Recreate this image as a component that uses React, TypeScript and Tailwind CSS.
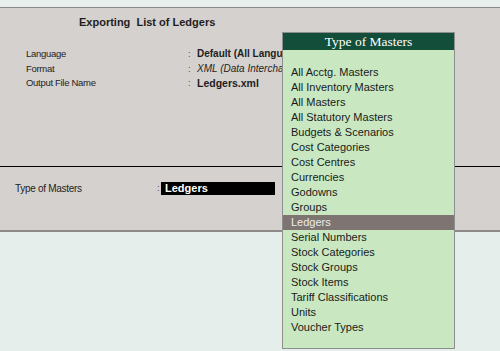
import React from "react";

const items = [
  "All Acctg. Masters",
  "All Inventory Masters",
  "All Masters",
  "All Statutory Masters",
  "Budgets & Scenarios",
  "Cost Categories",
  "Cost Centres",
  "Currencies",
  "Godowns",
  "Groups",
  "Ledgers",
  "Serial Numbers",
  "Stock Categories",
  "Stock Groups",
  "Stock Items",
  "Tariff Classifications",
  "Units",
  "Voucher Types",
];

export default function App() {
  return (
    <div
      className="relative w-[500px] h-[351px] overflow-hidden bg-[#e6eeeb] text-[#1e1e1e]"
      style={{ fontFamily: '"Liberation Sans", Arial, sans-serif' }}
    >
      <div className="h-[7px] bg-[#e8efec] border-b border-[#8c8a88] box-content" />
      <div className="bg-[#d5d1ce] border-b-2 border-[#8e8a88]">
        <div className="h-[159px] border-b border-black box-border pt-[7px]">
          <div className="pl-[79px] text-[11px] font-bold leading-[14px] whitespace-pre">
            Exporting  List of Ledgers
          </div>
          <div className="mt-[18px] flex flex-col">
            {[
              { l: "Language", v: "Default (All Languages)", c: "font-bold text-[10px]" },
              { l: "Format", v: "XML (Data Interchange)", c: "italic text-[10px]" },
              { l: "Output File Name", v: "Ledgers.xml", c: "font-bold text-[10.5px]" },
            ].map((r) => (
              <div key={r.l} className="flex h-[14.5px] items-center leading-[14px]">
                <div className="w-[188px] pl-[26px] text-[9.5px] tracking-[-0.3px]">{r.l}</div>
                <div className="w-[9px] text-[9.5px] text-[#555]">:</div>
                <div className={`whitespace-nowrap ${r.c}`}>{r.v}</div>
              </div>
            ))}
          </div>
        </div>
        <div className="h-[63px] pt-[15px]">
          <div className="flex items-center h-[13px]">
            <div className="w-[157px] pl-[15px] text-[10px] tracking-[-0.3px]">Type of Masters</div>
            <div className="w-[4px] text-[9.5px] text-[#555]">:</div>
            <div className="w-[114px] h-[13px] bg-black text-white font-bold text-[11px] leading-[13px] pl-[4px]">
              Ledgers
            </div>
          </div>
        </div>
      </div>

      <div className="absolute left-[282px] top-[32px] w-[173px] h-[317px] border border-[#8e8e8e] bg-[#c9e8c2]">
        <div
          className="h-[17px] bg-[#124e3a] text-white text-center text-[13.5px] leading-[17px]"
          style={{ fontFamily: '"Liberation Serif", "Times New Roman", serif' }}
        >
          Type of Masters
        </div>
        <div className="pt-[15px]">
          {items.map((it) => (
            <div
              key={it}
              className={`h-[15px] leading-[15px] pl-[8px] text-[11px] ${
                it === "Ledgers" ? "bg-[#7e7572] text-[#ececec]" : "text-[#1a1a1a]"
              }`}
            >
              {it}
            </div>
          ))}
        </div>
      </div>
    </div>
  );
}
